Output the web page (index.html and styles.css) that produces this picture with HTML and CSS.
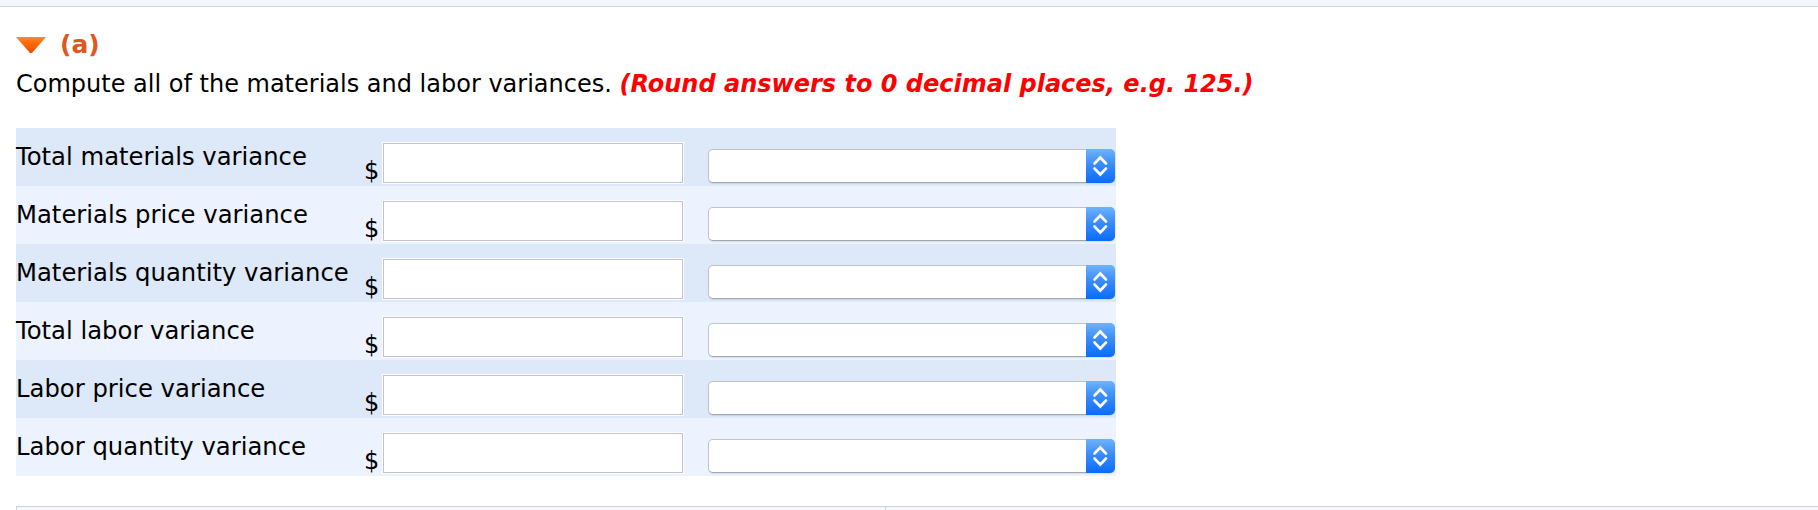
FILE: index.html
```html
<!DOCTYPE html>
<html lang="en">
<head>
<meta charset="utf-8">
<title>Part (a)</title>
<link rel="stylesheet" href="styles.css">
</head>
<body>
<div class="topbar"></div>
<div class="content">
  <div class="part-heading">
    <svg class="caret" width="30" height="16" viewBox="0 0 30 16" aria-hidden="true">
      <defs>
        <linearGradient id="cg" x1="0" y1="0" x2="0" y2="1">
          <stop offset="0" stop-color="#ff8a2e"/>
          <stop offset="0.35" stop-color="#ff6a0c"/>
          <stop offset="1" stop-color="#e84e00"/>
        </linearGradient>
      </defs>
      <polygon points="0,0 30,0 16,16 14,16" fill="url(#cg)"/>
    </svg>
    <span class="part-label">(a)</span>
  </div>
  <p class="instructions">Compute all of the materials and labor variances. <em class="note">(Round answers to 0 decimal places, e.g. 125.)</em></p>

  <div class="answer-table">
    <div class="row odd">
      <div class="label"><span>Total materials variance</span></div>
      <div class="money"><span class="dollar">$</span><input class="amount" type="text"></div>
      <div class="select"><span class="select-btn"><svg width="29" height="34" viewBox="0 0 29 34"><polyline points="8.5,14.5 14.3,8.5 20,14.5"/><polyline points="8.5,19.5 14.3,25.5 20,19.5"/></svg></span></div>
    </div>
    <div class="row even">
      <div class="label"><span>Materials price variance</span></div>
      <div class="money"><span class="dollar">$</span><input class="amount" type="text"></div>
      <div class="select"><span class="select-btn"><svg width="29" height="34" viewBox="0 0 29 34"><polyline points="8.5,14.5 14.3,8.5 20,14.5"/><polyline points="8.5,19.5 14.3,25.5 20,19.5"/></svg></span></div>
    </div>
    <div class="row odd">
      <div class="label"><span>Materials quantity variance</span></div>
      <div class="money"><span class="dollar">$</span><input class="amount" type="text"></div>
      <div class="select"><span class="select-btn"><svg width="29" height="34" viewBox="0 0 29 34"><polyline points="8.5,14.5 14.3,8.5 20,14.5"/><polyline points="8.5,19.5 14.3,25.5 20,19.5"/></svg></span></div>
    </div>
    <div class="row even">
      <div class="label"><span>Total labor variance</span></div>
      <div class="money"><span class="dollar">$</span><input class="amount" type="text"></div>
      <div class="select"><span class="select-btn"><svg width="29" height="34" viewBox="0 0 29 34"><polyline points="8.5,14.5 14.3,8.5 20,14.5"/><polyline points="8.5,19.5 14.3,25.5 20,19.5"/></svg></span></div>
    </div>
    <div class="row odd">
      <div class="label"><span>Labor price variance</span></div>
      <div class="money"><span class="dollar">$</span><input class="amount" type="text"></div>
      <div class="select"><span class="select-btn"><svg width="29" height="34" viewBox="0 0 29 34"><polyline points="8.5,14.5 14.3,8.5 20,14.5"/><polyline points="8.5,19.5 14.3,25.5 20,19.5"/></svg></span></div>
    </div>
    <div class="row even">
      <div class="label"><span>Labor quantity variance</span></div>
      <div class="money"><span class="dollar">$</span><input class="amount" type="text"></div>
      <div class="select"><span class="select-btn"><svg width="29" height="34" viewBox="0 0 29 34"><polyline points="8.5,14.5 14.3,8.5 20,14.5"/><polyline points="8.5,19.5 14.3,25.5 20,19.5"/></svg></span></div>
    </div>
  </div>

  <div class="bottom-panel">
    <div class="bp-left"></div>
    <div class="bp-right"></div>
  </div>
</div>
</body>
</html>
```
FILE: styles.css
```css
html, body {
  margin: 0;
  padding: 0;
  background: #ffffff;
  overflow: hidden;
}

body {
  font-family: "DejaVu Sans", Verdana, sans-serif;
  color: #000;
}

.topbar {
  height: 6px;
  background: #f3f7fb;
  border-bottom: 1px solid #cbd5e3;
}

.content {
  padding-left: 16px;
}

.part-heading {
  display: flex;
  align-items: center;
  height: 30px;
  margin-top: 23px;
  gap: 14px;
}

.caret {
  display: block;
  flex: none;
}

.part-label {
  font-size: 25px;
  line-height: 30px;
  font-weight: bold;
  color: #e0571d;
}

.instructions {
  margin: 9px 0 0;
  font-size: 24px;
  line-height: 30px;
  white-space: nowrap;
}

.note {
  font-weight: bold;
  font-style: italic;
  color: #ff0000;
}

.answer-table {
  margin-top: 29px;
  width: 1100px;
}

.row {
  display: flex;
  height: 58px;
}

.row.odd {
  background: #dde8f8;
}

.row.even {
  background: #ecf3fe;
}

.label {
  width: 348px;
  flex: none;
  padding-top: 14px;
  box-sizing: border-box;
}

.label span {
  display: inline-block;
  font-size: 24.3px;
  line-height: normal;
  white-space: nowrap;
}

.money {
  display: flex;
  align-items: flex-end;
  align-self: flex-end;
  margin-bottom: 3px;
  flex: none;
}

.dollar {
  width: 19px;
  font-size: 24px;
  line-height: 24px;
}

.amount {
  display: block;
  width: 300px;
  height: 40px;
  box-sizing: border-box;
  margin: 0;
  padding: 0 4px;
  border: 1px solid #c3c3c3;
  box-shadow: 0 0 0 1px #fafcff;
  background: #fff;
  font: inherit;
  outline: none;
}

.select {
  display: flex;
  justify-content: flex-end;
  align-self: flex-end;
  width: 407px;
  height: 34px;
  box-sizing: border-box;
  margin: 0 0 3px 25px;
  background: #fff;
  border: 1px solid #bfc3ca;
  border-bottom-color: #a2a8b1;
  border-radius: 5px;
  box-shadow: 0 1px 1px rgba(60, 70, 90, 0.12);
  flex: none;
}

.select-btn {
  display: block;
  width: 29px;
  height: 34px;
  margin: -1px -1px -1px 0;
  border-radius: 0 5px 5px 0;
  background: linear-gradient(#6db3fd, #3b8cfb 45%, #0a6bfa);
}

.select-btn svg {
  display: block;
}

.select-btn polyline {
  fill: none;
  stroke: #ffffff;
  stroke-width: 2.6;
  stroke-linecap: round;
  stroke-linejoin: miter;
}

.bottom-panel {
  display: flex;
  margin-top: 30px;
  height: 20px;
  border-top: 1px solid #c9d2df;
  background: #f6f8fb;
}

.bp-left {
  width: 868px;
  border-left: 1px solid #c9d2df;
  border-right: 1px solid #c9d2df;
}

.bp-right {
  flex: 1;
}
```
